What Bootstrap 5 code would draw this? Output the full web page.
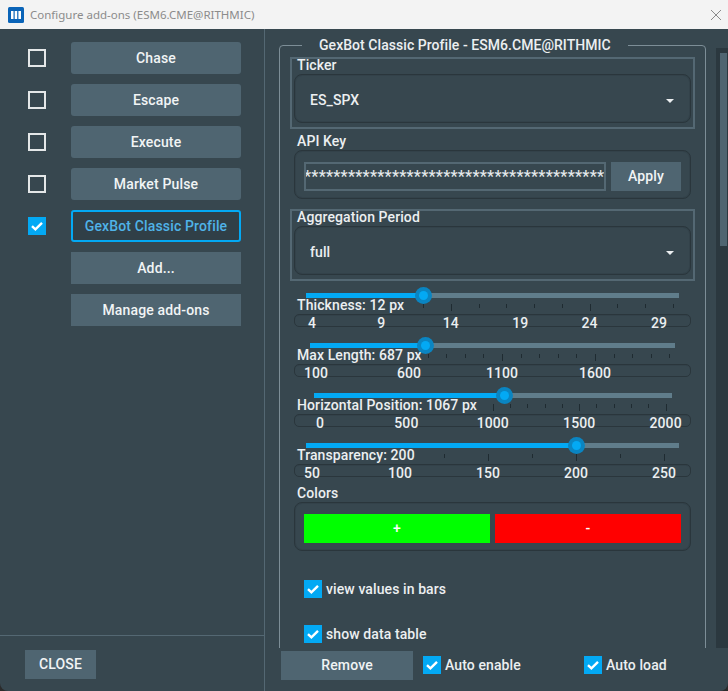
<!DOCTYPE html>
<html lang="en">
<head>
    <meta charset="UTF-8">
    <meta name="viewport" content="width=device-width, initial-scale=1.0">
    <title>Configure add-ons</title>
    <link href="https://cdn.jsdelivr.net/npm/bootstrap@5.3.0/dist/css/bootstrap.min.css" rel="stylesheet">
    <style>
        html, body { height: 100%; background: #2b2b2b; overflow: hidden; }
        body { font-family: Roboto, sans-serif; font-size: 14px; font-weight: 500; color: #eceff1; line-height: 17px; letter-spacing: .1px; }
        .app-win { height: 691px; background: #37474f; border-radius: 0 0 8px 8px; overflow: hidden; }
        .title-bar { height: 29px; background: #f3f3f3; color: #8b8b8b; font: 400 11.5px "Noto Sans", sans-serif; letter-spacing: 0; padding-left: 8px; }
        .title-bar svg { margin-right: 6px; }
        .close-x { margin-left: auto; margin-right: 3px; }
        .left-pane { width: 265px; border-right: 1px solid #546873; }
        .addon-list { padding: 13px 0 0 28px; gap: 10px; }
        .left-foot { height: 56px; border-top: 1px solid #546873; padding: 14px 0 0 25px; }

        .qbtn.btn { background: #4f6571; color: #f1f4f5; border: 0; border-radius: 0; font-size: 14px; font-weight: 500; line-height: 17px; letter-spacing: .15px; padding: 0; height: 29px; }
        .addon-btn.btn { width: 170px; height: 32px; margin-left: 25px; }
        .addon-btn.plain-btn { margin-left: 43px; }
        .addon-btn.rounded-btn { border-radius: 3px; }
        .addon-btn.sel-btn { background: #303f47; border: 2px solid #03a9f4; color: #4fb3e8; border-radius: 3px; }
        .close-btn.btn { width: 71px; text-transform: uppercase; }
        .remove-btn.btn { width: 132px; }
        .apply-btn.btn { width: 70px; }

        .chk.form-check-input { width: 18px; height: 18px; margin: 0; flex: none; background-color: transparent; border: 2px solid #e4e7e8; border-radius: 0; }
        .chk.form-check-input:checked { background-color: #03a9f4; border-color: #03a9f4; background-size: 18px 18px; background-position: -2px -2px; background-image: url("data:image/svg+xml,%3Csvg xmlns='http://www.w3.org/2000/svg' viewBox='0 0 18 18'%3E%3Cpath d='M4 9.2l3.4 3.2L14 5.8' fill='none' stroke='%23fff' stroke-width='2.4'/%3E%3C/svg%3E"); }

        .scroll-view { height: 619px; padding-top: 16px; overflow: hidden; }
        .group-wrap { width: 451px; padding-left: 14px; }
        .group-box { width: 427px; height: 700px; border: 1px solid #7d8e97; border-radius: 4px 4px 0 0; padding: 0 10px; }
        .group-title { display: block; width: fit-content; background: #37474f; margin: -9px 0 3px 12px; padding: 0 17px; height: 17px; letter-spacing: .05px; }
        .frame-box { border: 2px solid #546873; padding: 0 2px 4px; width: 405px; }
        .frame-box.second-frame { margin-top: 10px; }
        .frame-label { height: 15px; line-height: 13px; padding-left: 3px; }
        .sunk-box { height: 49px; border: 1px solid #2a363c; border-radius: 8px; width: 397px; box-shadow: inset 0 0 0 1px #33424a; }
        .field-label { height: 17px; padding: 0 0 0 7px; line-height: 16px; margin-top: 4px; }
        .field-box { margin-left: 4px; padding: 11px 9px; gap: 5px; }
        .combo.form-select { height: 49px; color: #eceff1; font-size: 14px; font-weight: 500; letter-spacing: .1px; padding: 3px 30px 0 15px; border: 1px solid #2a363c; border-radius: 8px; box-shadow: inset 0 0 0 1px #33424a;
            background-color: #37474f; background-repeat: no-repeat;
            background-image: url("data:image/svg+xml,%3Csvg xmlns='http://www.w3.org/2000/svg' viewBox='0 0 8 4'%3E%3Cpath d='M0 0h8L4 4z' fill='%23eceff1'/%3E%3C/svg%3E");
            background-size: 8px 4px; background-position: right 16px top 24px; }
        .key-input.form-control { width: 302px; height: 29px; padding: 0; text-indent: -2px; background: transparent; color: #e4e9eb; border: 2px solid #546873; border-radius: 0; font-size: 16px; font-weight: 500; letter-spacing: .23px; box-shadow: none; }

        .sld-list { margin-top: 6px; }
        .sld-row { position: relative; height: 39px; margin-bottom: 11px; }
        .sld-row:last-child { margin-bottom: 9px; }
        .sld-track { position: absolute; top: 6px; height: 5px; background: #607d8b; }
        .sld-fill { position: absolute; top: 6px; height: 5px; background: #03a9f4; }
        .sld-knob { position: absolute; top: 0; width: 17px; height: 17px; margin-left: -8px; border-radius: 50%; background: #0a85c2; }
        .sld-knob::after { content: ""; position: absolute; left: 4px; top: 4px; width: 9px; height: 9px; border-radius: 50%; background: #03a9f4; }
        .sld-tick { position: absolute; top: 17px; width: 1px; height: 4px; background: #1f2b31; }
        .sld-tick.long-tick { height: 7px; }
        .sld-label { position: absolute; top: 11px; left: 7px; height: 15px; line-height: 14px; padding-right: 6px; background: #37474f; }
        .sld-scale { position: absolute; top: 27px; left: 4px; width: 397px; height: 13px; border: 1px solid #2a363c; border-radius: 5px; box-shadow: inset 0 1px 0 #33424a; }
        .sld-num { position: absolute; top: 28px; line-height: 16px; transform: translateX(-50%); }

        .colors-label.field-label { margin-top: 0; }
        .colors-box { margin-left: 4px; padding: 11px 9px; gap: 5px; }
        .swatch-btn.btn { width: 186px; border-radius: 0; color: #fff; }
        .plus-btn.btn { background: #00ff00; }
        .minus-btn.btn { background: #ff0000; }
        .opt-row { margin: 29px 0 0 14px; gap: 4px; height: 18px; }
        .opt-row + .opt-row { margin-top: 27px; }
        .opt-row label, .foot-bar label { line-height: 18px; }

        .fake-scroll { width: 12px; margin: 3px 0 0 auto; background: #2b383f; padding: 5px 1px 0 4px; }
        .fake-thumb { height: 193px; background: #4f6571; }
        .foot-bar { height: 43px; padding: 3px 0 0 16px; }
        .foot-chk { gap: 4px; height: 18px; margin-top: 5px; }
        .foot-a { margin-left: 10px; width: 161px; }
    </style>
</head>
<body>
    <div class="app-win d-flex flex-column">
        <div class="title-bar d-flex align-items-center">
            <svg width="16" height="16" viewBox="0 0 16 16"><rect width="16" height="16" rx="1.5" fill="#0a64b8"/><path d="M3 4h2.5v8H3zM6.7 4h2.5v8H6.7zM10.4 4H13v8h-2.6z" fill="#fff"/></svg>
            <span>Configure add-ons (ESM6.CME@RITHMIC)</span>
            <svg class="close-x" width="12" height="12" viewBox="0 0 12 12"><path d="M1 1l10 10M11 1L1 11" stroke="#8a8a8a" stroke-width="1" fill="none"/></svg>
        </div>
        <div class="d-flex flex-grow-1">
            <div class="left-pane d-flex flex-column">
                <div class="addon-list d-flex flex-column flex-grow-1">
                    <div class="d-flex align-items-center"><input class="chk form-check-input" type="checkbox"><button class="qbtn addon-btn rounded-btn btn">Chase</button></div>
                    <div class="d-flex align-items-center"><input class="chk form-check-input" type="checkbox"><button class="qbtn addon-btn rounded-btn btn">Escape</button></div>
                    <div class="d-flex align-items-center"><input class="chk form-check-input" type="checkbox"><button class="qbtn addon-btn rounded-btn btn">Execute</button></div>
                    <div class="d-flex align-items-center"><input class="chk form-check-input" type="checkbox"><button class="qbtn addon-btn rounded-btn btn">Market Pulse</button></div>
                    <div class="d-flex align-items-center"><input class="chk form-check-input" type="checkbox" checked><button class="qbtn addon-btn sel-btn btn">GexBot Classic Profile</button></div>
                    <div class="d-flex"><button class="qbtn addon-btn plain-btn btn">Add...</button></div>
                    <div class="d-flex"><button class="qbtn addon-btn plain-btn btn">Manage add-ons</button></div>
                </div>
                <div class="left-foot"><button class="qbtn close-btn btn">Close</button></div>
            </div>
            <div class="flex-grow-1 d-flex flex-column">
                <div class="scroll-view d-flex">
                    <div class="group-wrap">
                        <div class="group-box">
                            <span class="group-title">GexBot Classic Profile - ESM6.CME@RITHMIC</span>
                            <div class="frame-box">
                                <div class="frame-label">Ticker</div>
                                <select class="combo sunk-box form-select"><option>ES_SPX</option></select>
                            </div>
                            <div class="field-label">API Key</div>
                            <div class="sunk-box field-box d-flex">
                                <input class="key-input form-control" type="text" value="**************************************************">
                                <button class="qbtn apply-btn btn">Apply</button>
                            </div>
                            <div class="frame-box second-frame">
                                <div class="frame-label">Aggregation Period</div>
                                <select class="combo sunk-box form-select"><option>full</option></select>
                            </div>
                            <div id="sliders" class="sld-list"></div>
                            <div class="field-label colors-label">Colors</div>
                            <div class="sunk-box colors-box d-flex">
                                <button class="qbtn swatch-btn plus-btn btn">+</button>
                                <button class="qbtn swatch-btn minus-btn btn">-</button>
                            </div>
                            <div class="opt-row d-flex align-items-center"><input class="chk form-check-input" type="checkbox" checked><label>view values in bars</label></div>
                            <div class="opt-row d-flex align-items-center"><input class="chk form-check-input" type="checkbox" checked><label>show data table</label></div>
                        </div>
                    </div>
                    <div class="fake-scroll"><div class="fake-thumb"></div></div>
                </div>
                <div class="foot-bar d-flex align-items-start">
                    <button class="qbtn remove-btn btn">Remove</button>
                    <div class="foot-chk foot-a d-flex align-items-center"><input class="chk form-check-input" type="checkbox" checked><label>Auto enable</label></div>
                    <div class="foot-chk d-flex align-items-center"><input class="chk form-check-input" type="checkbox" checked><label>Auto load</label></div>
                </div>
            </div>
        </div>
    </div>

    <script src="https://cdn.jsdelivr.net/npm/bootstrap@5.3.0/dist/js/bootstrap.bundle.min.js"></script>
    <script>
        // x0 = pixel of min value, pxPer = pixels per unit, all relative to the group's content edge (x=290)
        const sliders = [
            { label: 'Thickness: 12 px', min: 4, max: 30, val: 12, x0: 22, pxPer: 13.88, tick: 2, labelEvery: 5, maxLabel: 29 },
            { label: 'Max Length: 687 px', min: 100, max: 2000, val: 687, x0: 26, pxPer: 0.186, tick: 100, labelEvery: 500, maxLabel: 1600 },
            { label: 'Horizontal Position: 1067 px', min: 0, max: 2000, val: 1067, x0: 30, pxPer: 0.1728, tick: 100, labelEvery: 500, maxLabel: 2000 },
            { label: 'Transparency: 200', min: 50, max: 255, val: 200, x0: 22, pxPer: 1.76, tick: 25, labelEvery: 50, maxLabel: 250 }
        ];

        const box = document.getElementById('sliders');
        sliders.forEach(s => {
            const pos = v => s.x0 + (v - s.min) * s.pxPer;
            let html = '<div class="sld-row">';
            html += `<div class="sld-track" style="left:${pos(s.min) - 6}px;width:${pos(s.max) - pos(s.min) + 12}px"></div>`;
            html += `<div class="sld-fill" style="left:${pos(s.min) - 6}px;width:${pos(s.val) - pos(s.min) + 6}px"></div>`;
            for (let v = s.min; v <= s.max; v += s.tick) {
                const isLong = (v - s.min) % s.labelEvery === 0;
                html += `<div class="sld-tick${isLong ? ' long-tick' : ''}" style="left:${Math.round(pos(v))}px"></div>`;
            }
            html += `<div class="sld-label">${s.label}</div>`;
            html += '<div class="sld-scale"></div>';
            for (let v = s.min; v <= s.maxLabel; v += s.labelEvery) {
                html += `<div class="sld-num" style="left:${pos(v)}px">${v}</div>`;
            }
            html += `<div class="sld-knob" style="left:${pos(s.val)}px"></div>`;
            html += '</div>';
            box.insertAdjacentHTML('beforeend', html);
        });
    </script>
</body>
</html>
